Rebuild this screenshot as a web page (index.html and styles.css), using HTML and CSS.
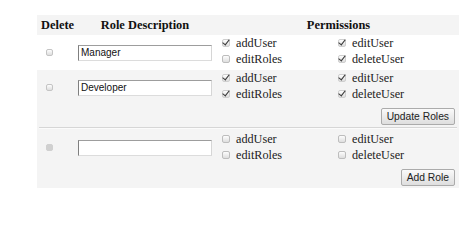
FILE: index.html
```html
<!DOCTYPE html>
<html>
<head>
<meta charset="utf-8">
<link rel="stylesheet" href="styles.css">
</head>
<body>
<table class="roles">
  <colgroup>
    <col class="w-del"><col class="w-role"><col class="w-perm1"><col class="w-perm2">
  </colgroup>
  <thead>
    <tr>
      <th class="h-del">Delete</th>
      <th class="h-role">Role Description</th>
      <th class="h-perm" colspan="2">Permissions</th>
    </tr>
  </thead>
  <tbody>
    <tr class="row-white">
      <td class="c-del"><input type="checkbox" class="cb cb-del"></td>
      <td class="c-role"><input type="text" class="txt" value="Manager"></td>
      <td class="c-perm">
        <label class="perm"><input type="checkbox" class="cb" checked>addUser</label>
        <label class="perm"><input type="checkbox" class="cb">editRoles</label>
      </td>
      <td class="c-perm">
        <label class="perm"><input type="checkbox" class="cb" checked>editUser</label>
        <label class="perm"><input type="checkbox" class="cb" checked>deleteUser</label>
      </td>
    </tr>
    <tr>
      <td class="c-del"><input type="checkbox" class="cb cb-del"></td>
      <td class="c-role"><input type="text" class="txt" value="Developer"></td>
      <td class="c-perm">
        <label class="perm"><input type="checkbox" class="cb" checked>addUser</label>
        <label class="perm"><input type="checkbox" class="cb" checked>editRoles</label>
      </td>
      <td class="c-perm">
        <label class="perm"><input type="checkbox" class="cb" checked>editUser</label>
        <label class="perm"><input type="checkbox" class="cb" checked>deleteUser</label>
      </td>
    </tr>
    <tr>
      <td class="c-action" colspan="4"><button class="btn">Update Roles</button></td>
    </tr>
    <tr class="sep-row">
      <td colspan="4"><div class="sep"></div></td>
    </tr>
    <tr class="row-new">
      <td class="c-del"><input type="checkbox" class="cb cb-del" disabled></td>
      <td class="c-role"><input type="text" class="txt" value=""></td>
      <td class="c-perm">
        <label class="perm"><input type="checkbox" class="cb">addUser</label>
        <label class="perm"><input type="checkbox" class="cb">editRoles</label>
      </td>
      <td class="c-perm">
        <label class="perm"><input type="checkbox" class="cb">editUser</label>
        <label class="perm"><input type="checkbox" class="cb">deleteUser</label>
      </td>
    </tr>
    <tr>
      <td class="c-action c-last" colspan="4"><button class="btn">Add Role</button></td>
    </tr>
  </tbody>
</table>
</body>
</html>
```
FILE: styles.css
```css
html, body {
  margin: 0;
  padding: 0;
  background: #ffffff;
}

body {
  font-family: "Liberation Serif", "Times New Roman", serif;
  font-size: 12px;
  color: #1a1a1a;
}

.roles {
  margin: 15px 0 0 37px;
  width: 422px;
  border-collapse: collapse;
  table-layout: fixed;
  background: #f4f4f4;
}

.w-del { width: 35px; }
.w-role { width: 146px; }
.w-perm1 { width: 116px; }
.w-perm2 { width: 125px; }

.roles th {
  font-weight: bold;
  font-size: 12.4px;
  line-height: 16px;
  padding: 2px 0;
  color: #111;
}

.h-del {
  text-align: left;
  padding-left: 4px !important;
}

.h-role, .h-perm {
  text-align: center;
}

.roles td {
  padding: 0;
  vertical-align: middle;
}

.row-white td {
  background: #ffffff;
}

.c-del {
  padding-left: 9px !important;
}

.c-role {
  padding-left: 6px !important;
}

.c-perm {
  padding: 0 0 3px 4px !important;
}

.row-new .c-perm {
  padding-top: 2px !important;
}

.perm {
  display: flex;
  align-items: center;
  height: 16px;
  line-height: 16px;
  font-size: 12.2px;
  white-space: nowrap;
  color: #222;
}

.cb {
  appearance: none;
  -webkit-appearance: none;
  margin: 0 6px 0 0;
  width: 8px;
  height: 8px;
  border: 1px solid #bdbdbd;
  border-radius: 2px;
  background: linear-gradient(#fdfdfd, #dedede);
  position: relative;
  flex: none;
  box-sizing: border-box;
}

.cb:checked {
  border-color: #cfcfcf;
}

.cb:checked::after {
  content: "";
  position: absolute;
  left: 1px;
  top: -2px;
  width: 3px;
  height: 6px;
  border: solid #3a3a3a;
  border-width: 0 1.5px 1.5px 0;
  transform: rotate(38deg);
}

.cb-del {
  width: 7px;
  height: 7px;
  display: block;
  border-color: #c4c4c4;
}

.cb-del:disabled {
  background: #d0d0d0;
  border-color: #d0d0d0;
}

.txt {
  display: block;
  box-sizing: border-box;
  width: 134px;
  height: 16px;
  margin: 0;
  padding: 0 0 0 2px;
  border: 1px solid;
  border-color: #9d9d9d #d6d6d6 #dcdcdc #7f7f7f;
  font-family: "Liberation Sans", Arial, sans-serif;
  font-size: 10px;
  color: #111;
  background: #fff;
  outline: none;
}

.c-action {
  text-align: right;
  padding: 3px 4px 2px 0 !important;
}

.btn {
  font-family: "Liberation Sans", Arial, sans-serif;
  font-size: 10.3px;
  color: #222;
  height: 17px;
  padding: 0 5px;
  margin: 0;
  border: 1px solid #ababab;
  border-radius: 2px;
  background: linear-gradient(#fafafa, #dedede);
  display: inline-block;
  vertical-align: top;
}

.sep-row td {
  padding: 0 2px;
}

.sep {
  height: 1px;
  border-top: 1px solid #d6d6d6;
  background: #fbfbfb;
}
```
